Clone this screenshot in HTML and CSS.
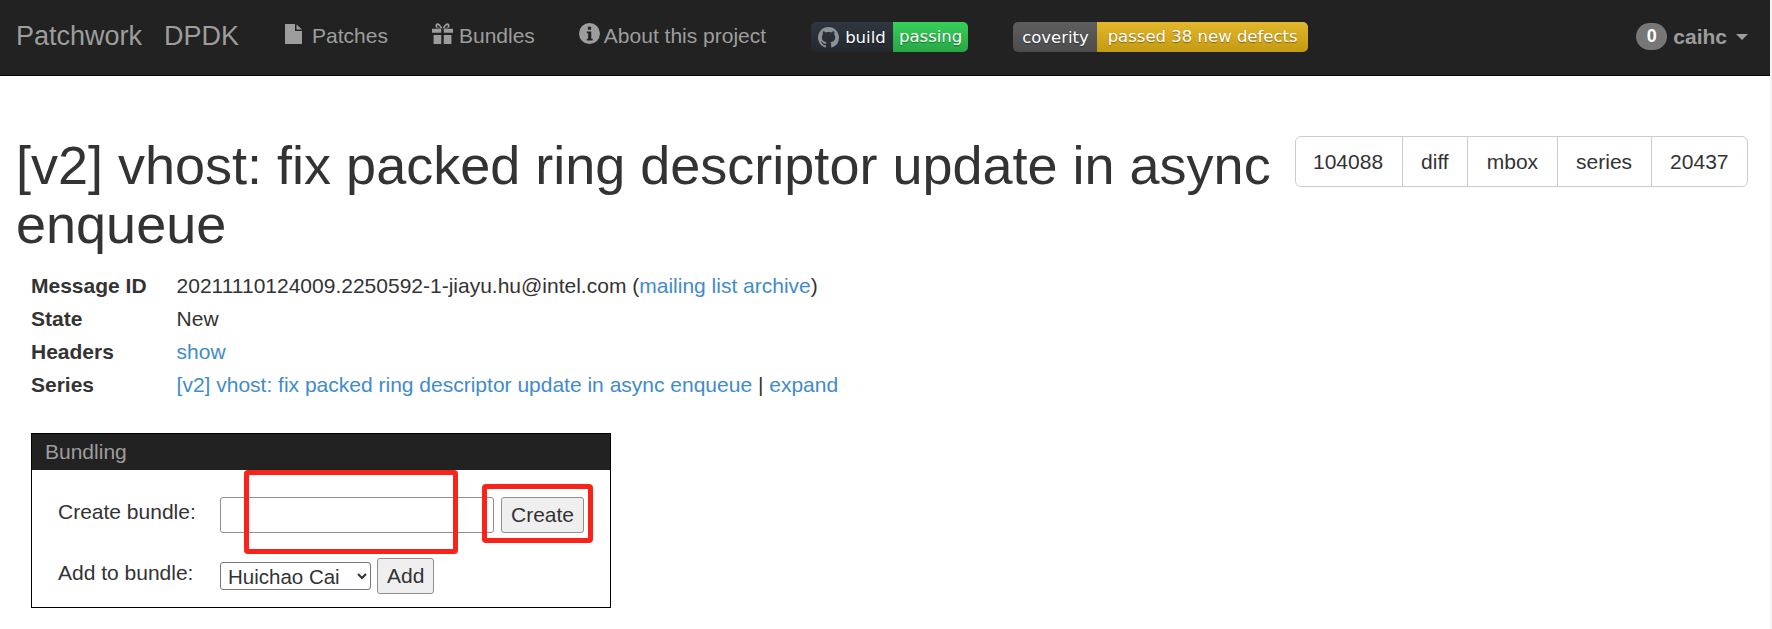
FILE: index.html
```html
<!DOCTYPE html>
<html lang="en">
<head>
<meta charset="utf-8">
<title>[v2] vhost: fix packed ring descriptor update in async enqueue</title>
<link rel="stylesheet" href="styles.css">
</head>
<body>
<nav class="navbar">
  <a class="brand" href="#">Patchwork</a>
  <a class="brand project" href="#">DPDK</a>
  <ul class="nav-links">
    <li><a href="#"><svg class="glyph file" viewBox="0 0 17 20"><path d="M0 0h10v7h7v13H0z"/><path d="M11.500 .5L17 5.500H11.500z"/></svg>Patches</a></li>
    <li><a href="#"><svg class="glyph gift" viewBox="0 0 20 20"><path d="M0 5.500h8.800v3.800H0zM11.200 5.500H20v3.800h-8.800zM1.500 11.500h7.300V20H1.500zM11.200 11.500h7.300V20h-7.300z"/><path fill-rule="evenodd" d="M10 5C8.400 1.800 6.500 0 5 .2 3.600.4 3 1.900 3.400 3.400 3.700 4.500 4.500 5 5.500 5zM5.400 2.200c1 .1 2 1.100 2.600 2.400H5.800C4.600 4.300 4.500 2.200 5.400 2.200zM10 5c1.600-3.200 3.500-5 5-4.800 1.400.2 2 1.700 1.600 3.200-.3 1.100-1.100 1.600-2.100 1.600zM14.600 2.200c-1 .1-2 1.100-2.600 2.400h2.200c1.200-.3 1.300-2.400.4-2.400z"/></svg>Bundles</a></li>
    <li><a href="#"><svg class="glyph info" viewBox="0 0 20 20"><path fill-rule="evenodd" d="M10 0a10 10 0 1 0 0 20a10 10 0 0 0 0-20zM8.500 3.500h3v3h-3zM7.500 8h4.200v7h1.300v1.700H7.500V15h1.200V9.700H7.500z"/></svg>About this project</a></li>
  </ul>
  <div class="badge build-badge">
    <span class="badge-key"><svg class="octocat" viewBox="0 0 16 16"><path d="M8 0C3.58 0 0 3.58 0 8c0 3.54 2.29 6.53 5.47 7.59.4.07.55-.17.55-.38 0-.19-.01-.82-.01-1.490-2.010.37-2.530-.49-2.690-.94-.09-.23-.48-.94-.82-1.130-.28-.15-.68-.52-.01-.53.63-.01 1.080.58 1.230.82.72 1.210 1.870.87 2.330.66.07-.52.28-.87.51-1.070-1.780-.2-3.640-.89-3.640-3.950 0-.87.31-1.590.82-2.150-.08-.2-.36-1.020.08-2.120 0 0 .67-.21 2.200.82.64-.18 1.320-.27 2-.27.68 0 1.360.09 2 .27 1.530-1.040 2.200-.82 2.200-.82.44 1.100.16 1.920.08 2.120.51.56.82 1.270.82 2.150 0 3.070-1.870 3.750-3.650 3.950.29.25.54.73.54 1.480 0 1.070-.01 1.930-.01 2.200 0 .21.15.46.55.38A8.013 8.013 0 0 0 16 8c0-4.420-3.580-8-8-8z"/></svg>build</span><span class="badge-val green">passing</span>
  </div>
  <div class="badge coverity-badge">
    <span class="badge-key grey">coverity</span><span class="badge-val yellow">passed 38 new defects</span>
  </div>
  <div class="user-menu">
    <span class="count">0</span>
    <span class="username">caihc</span>
    <span class="caret"></span>
  </div>
</nav>

<main class="content">
  <div class="title-row">
    <h1>[v2] vhost: fix packed ring descriptor update in async enqueue</h1>
    <div class="btn-group">
      <a href="#">104088</a><a href="#">diff</a><a href="#">mbox</a><a href="#">series</a><a href="#">20437</a>
    </div>
  </div>

  <table class="meta">
    <tr><th>Message ID</th><td>20211110124009.2250592-1-jiayu.hu@intel.com (<a href="#">mailing list archive</a>)</td></tr>
    <tr><th>State</th><td>New</td></tr>
    <tr><th>Headers</th><td><a href="#">show</a></td></tr>
    <tr><th>Series</th><td><a href="#">[v2] vhost: fix packed ring descriptor update in async enqueue</a> | <a href="#">expand</a></td></tr>
  </table>

  <section class="bundling">
    <h2>Bundling</h2>
    <div class="bundle-grid">
      <label>Create bundle:</label>
      <div class="field">
        <input type="text" class="bundle-input">
        <button type="button" class="create-btn">Create</button>
        <span class="mark mark-input"></span>
        <span class="mark mark-button"></span>
      </div>
      <label>Add to bundle:</label>
      <div class="field">
        <select><option>Huichao Cai</option></select>
        <button type="button">Add</button>
      </div>
    </div>
  </section>
</main>
</body>
</html>
```
FILE: styles.css
```css
* { box-sizing: border-box; }
html, body { margin: 0; padding: 0; height: 100%; overflow: hidden; }
body {
  font-family: "Liberation Sans", Arial, sans-serif;
  font-size: 21px;
  line-height: 30px;
  color: #333;
  background: #fff;
  border-right: 2px solid #f4f4f4;
}
a { color: #428bca; text-decoration: none; }

.navbar {
  display: flex;
  align-items: center;
  height: 76px;
  background: #222;
  border-bottom: 1px solid #080808;
  padding: 0 22px 4px 16px;
}
.brand { font-size: 27px; color: #9d9d9d; margin-right: 22px; }
.project { margin-right: 0; }
.nav-links {
  display: flex;
  list-style: none;
  margin: 0 0 0 46px;
  padding: 0;
}
.nav-links li { margin-right: 44px; }
.nav-links a { color: #9d9d9d; display: flex; align-items: center; }
.glyph { fill: #9d9d9d; margin-top: -4px; flex: none; }
.file { width: 17px; height: 20px; margin-right: 10px; }
.gift { width: 21px; height: 21px; margin-right: 6px; }
.info { width: 21px; height: 21px; margin-right: 4px; }

.badge {
  display: flex;
  height: 30px;
  border-radius: 5px;
  overflow: hidden;
  font-family: "DejaVu Sans", Verdana, sans-serif;
  font-size: 16.5px;
  line-height: 29px;
  color: #fff;
  margin-top: 3px;
  text-shadow: 0 1px 1px rgba(0,0,0,.4);
}
.build-badge { margin-left: 1px; width: 157px; }
.coverity-badge { margin-left: 45px; width: 295px; }
.badge-key {
  display: flex;
  align-items: center;
  gap: 6px;
  padding-left: 7px;
  background: linear-gradient(#2f3640, #24292e);
  width: 82px;
  flex: none;
}
.badge-key.grey { background: linear-gradient(#5e5e5e, #4c4c4c); width: 84px; padding-left: 9px; }
.badge-val { flex: 1; text-align: center; white-space: nowrap; }
.green { background: linear-gradient(#34d058, #28a745); }
.yellow { background: linear-gradient(#e3b72a, #c49a12); }
.octocat { width: 21px; height: 21px; fill: #8b9299; flex: none; }

.user-menu { margin-left: auto; margin-top: 2px; display: flex; align-items: center; color: #9d9d9d; font-weight: bold; font-size: 21px; }
.count {
  display: inline-block;
  width: 31px; height: 27px;
  line-height: 27px;
  border-radius: 14px;
  background: #777;
  color: #fff;
  text-align: center;
  font-size: 18px;
  margin-right: 6px;
}
.caret {
  width: 0; height: 0;
  margin-left: 9px;
  border-top: 6px solid #9d9d9d;
  border-left: 6px solid transparent;
  border-right: 6px solid transparent;
}

.content { padding: 0 22px 0 16px; }
.title-row { display: flex; justify-content: space-between; align-items: flex-start; }
h1 {
  font-size: 54px;
  font-weight: 500;
  line-height: 59px;
  margin: 60px 0 0;
  flex: 1;
}
.btn-group {
  display: flex;
  flex: none;
  height: 51px;
  margin-top: 60px;
  border: 1px solid #ccc;
  border-radius: 6px;
}
.btn-group a {
  color: #333;
  padding: 0 18.5px;
  line-height: 49px;
  border-left: 1px solid #ccc;
}
.btn-group a:first-child { border-left: 0; padding-left: 16.5px; }

.meta { border-collapse: collapse; margin: 17px 0 0 15px; }
.meta th { text-align: left; font-weight: bold; padding: 0 30px 3px 0; height: 33px; white-space: nowrap; }
.meta td { padding: 0 0 3px; height: 33px; }

.bundling {
  width: 580px;
  height: 175px;
  margin: 30px 0 0 15px;
  border: 1px solid #000;
}
.bundling h2 {
  margin: 0;
  height: 36px;
  background: #222;
  color: #9d9d9d;
  font-size: 21px;
  font-weight: normal;
  line-height: 36px;
  padding-left: 13px;
}
.bundle-grid {
  display: grid;
  grid-template-columns: 162px auto;
  row-gap: 25px;
  padding: 27px 0 0 26px;
  justify-content: start;
}
.bundle-grid label { font-size: 21px; line-height: 30px; }
.field { position: relative; display: flex; align-items: center; gap: 6px; }
.bundle-input {
  width: 274px;
  height: 36px;
  border: 1px solid #8f8f8f;
  border-radius: 3px;
  background: #fff;
}
.create-btn { margin-left: 1px; }
button {
  font: 21px "Liberation Sans", Arial, sans-serif;
  height: 36px;
  padding: 0 9px;
  color: #333;
  background: #efefef;
  border: 1px solid #8f8f8f;
  border-radius: 3px;
}
select {
  font: 20.5px "Liberation Sans", Arial, sans-serif;
  width: 151px;
  height: 28px;
  padding-left: 3px;
  color: #333;
  background: #fff;
  border: 1px solid #767676;
  border-radius: 3px;
}
.mark { position: absolute; border: 5px solid #f8241a; border-radius: 4px; pointer-events: none; }
.mark-input { left: 24px; top: -27px; width: 214px; height: 84px; }
.mark-button { left: 262px; top: -13px; width: 111px; height: 59px; }
```
